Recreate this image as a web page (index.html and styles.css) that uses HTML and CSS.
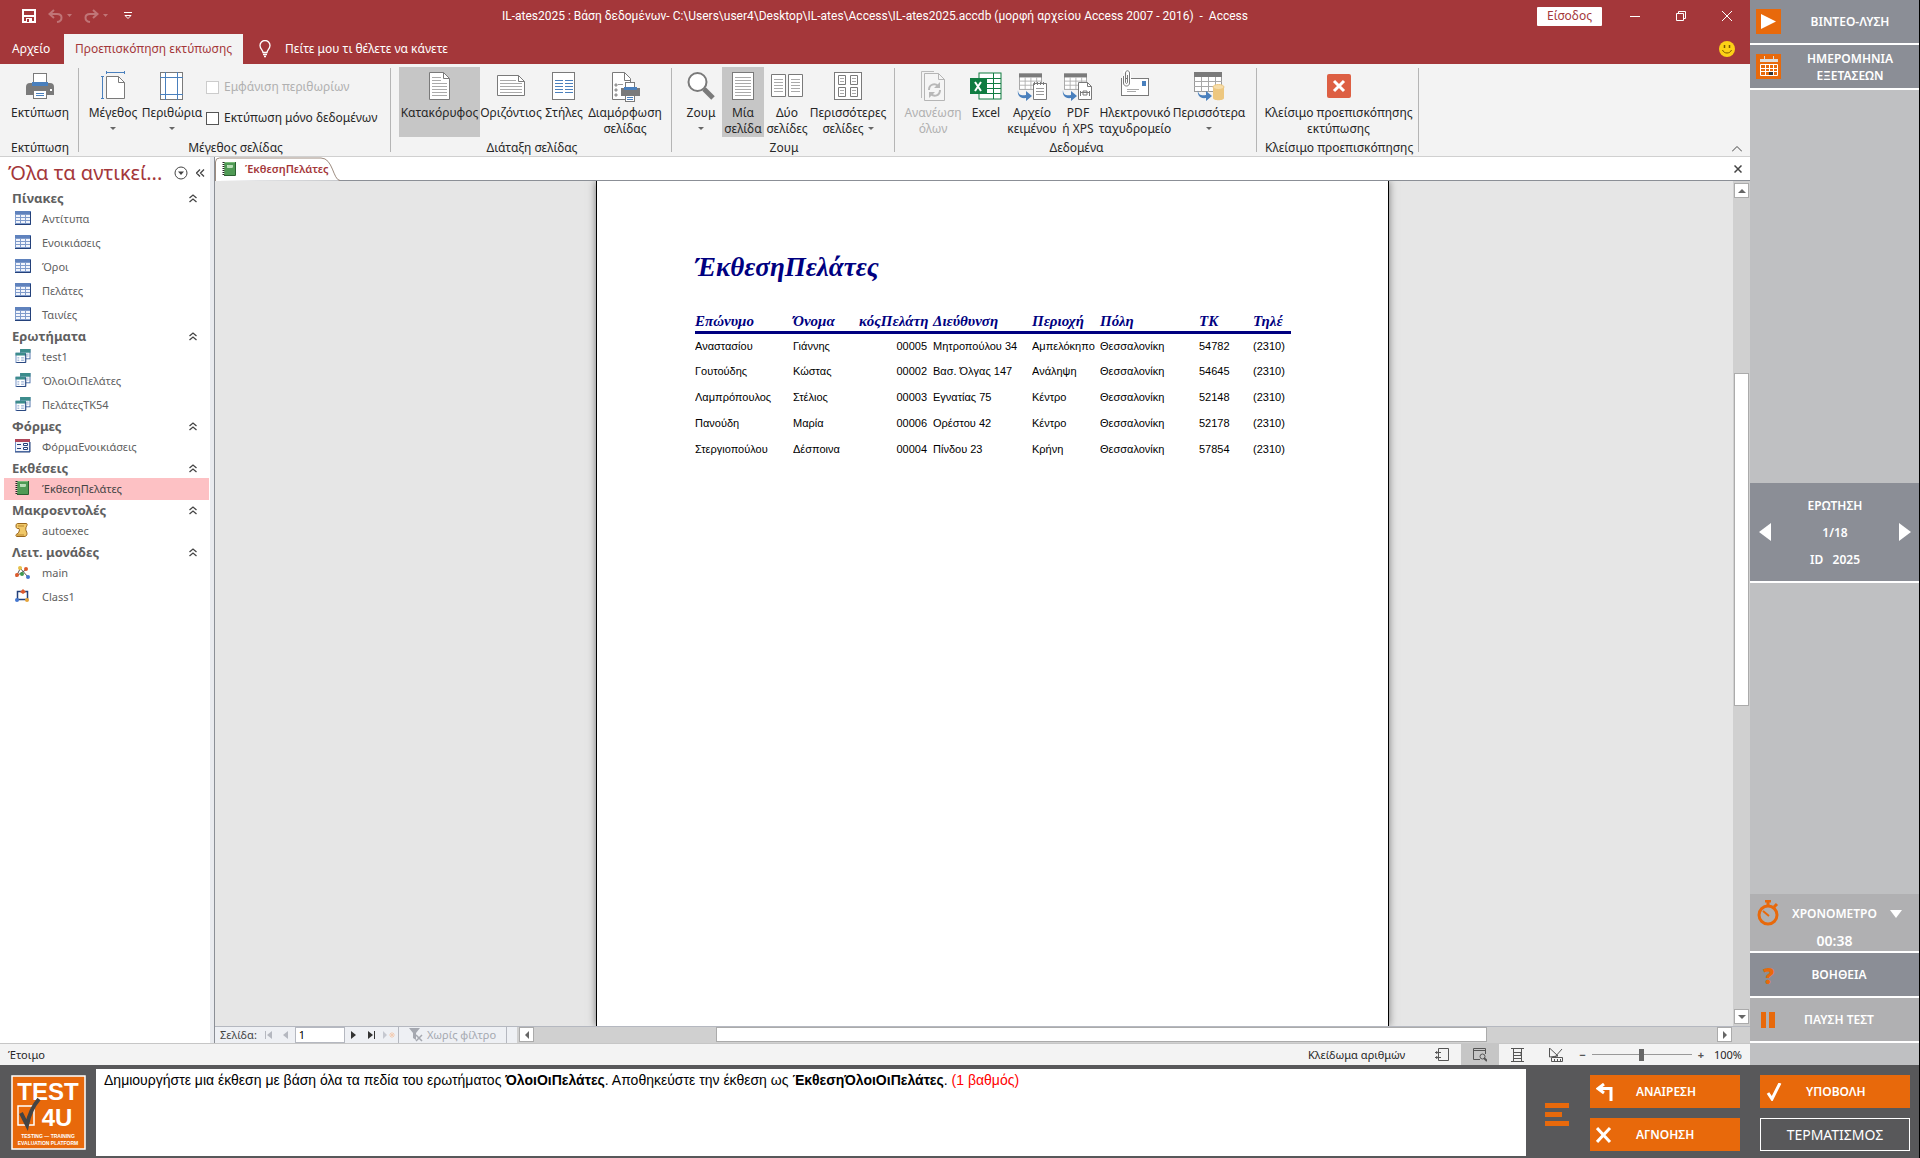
FILE: index.html
```html
<!DOCTYPE html>
<html lang="el">
<head>
    <meta charset="UTF-8">
    <meta name="viewport" content="width=device-width, initial-scale=1.0">
    <title>IL-ates2025 - Access</title>
    <link rel="stylesheet" href="styles.css">
</head>
<body>

    <!-- Shared icons -->
    <svg class="sprite" aria-hidden="true">
        <symbol id="i-table" viewBox="0 0 16 14">
            <rect x="0" y="0" width="16" height="14" fill="#7f9bcb"/>
            <rect x="0" y="0" width="16" height="3" fill="#5f82bd"/>
            <path d="M1 4h4v2H1zM6 4h4v2H6zM11 4h4v2h-4zM1 7h4v2H1zM6 7h4v2H6zM11 7h4v2h-4zM1 10h4v2H1zM6 10h4v2H6zM11 10h4v2h-4z" fill="#f2f5fc"/>
            <path d="M0 13.500h15.500V1" fill="none" stroke="#24417a"/>
        </symbol>
        <symbol id="i-query" viewBox="0 0 16 15">
            <rect x="5.500" y="0.500" width="10" height="10" fill="#fff" stroke="#4a6ea8"/>
            <path d="M5 0h11v4H5z" fill="#3c8c8c"/>
            <path d="M12 5.500h2M12 7.500h2" stroke="#8fa8d0"/>
            <rect x="0.500" y="4.500" width="10" height="10" fill="#fff" stroke="#6f8fc4"/>
            <path d="M0 4h11v3H0z" fill="#3c8c8c"/>
            <path d="M2 9.500h2M6 9.500h3M2 12h2M6 12h3" stroke="#7a98c8"/>
            <path d="M1 14.500h10V5" fill="none" stroke="#24417a"/>
        </symbol>
        <symbol id="i-report" viewBox="0 0 14 14">
            <rect x="2" y="0" width="12" height="13" fill="#4f9a55"/>
            <path d="M2 0h12v1H2zM2 0h1v13H2z" fill="#7cbb7c"/>
            <path d="M13.500 0v13.500H2" fill="none" stroke="#2a6131"/>
            <rect x="5.500" y="3.500" width="5" height="2" fill="#b5dfb3" stroke="#dff2dd" stroke-width=".6"/>
            <path d="M1.500 0v14" stroke="#222" stroke-width="2" stroke-dasharray="1 1"/>
        </symbol>
        <symbol id="i-fold" viewBox="0 0 8 9">
            <path d="M.5 4 4 1l3.500 3M.5 8 4 5l3.500 3" fill="none" stroke="#444" stroke-width="1.300"/>
        </symbol>
        <symbol id="i-arrow" viewBox="0 0 16 12">
            <path d="M1 1c0 5 4 6 8 5V2l6 5-6 5V9C3 10 0 6 1 1z" fill="#4a80bd"/>
        </symbol>
        <symbol id="i-grid" viewBox="0 0 28 26">
            <rect x="0.500" y="3.500" width="27" height="16" fill="#fff" stroke="#999"/>
            <path d="M0 0h28v5H0z" fill="#7a7a7a"/>
            <path d="M0 9.500h28M0 14.500h28M7.500 5v15M14.500 5v15M21.500 5v15" stroke="#a8a8a8"/>
        </symbol>
    </svg>

    <div class="workspace">
        <!-- Access window -->
        <div class="window">
            <header class="titlebar">
                <div class="quick-access">
                    <button type="button" aria-label="Αποθήκευση"><svg width="14" height="14" viewBox="0 0 14 14"><path d="M1 1h12v12H1zM1 7h12" fill="none" stroke="#fff" stroke-width="2"/><path d="M4 9h6v4H4z" fill="#fff"/><path d="M5 10h2v3H5z" fill="#a4373a"/></svg></button>
                    <button type="button" class="dim" disabled aria-label="Αναίρεση"><svg width="24" height="14" viewBox="0 0 24 14"><path d="M6 1 1.500 5 6 9M2 5h7c6 0 6 7 0 8" fill="none" stroke="currentColor" stroke-width="2"/><path d="M19 5h5l-2.500 3z" fill="currentColor"/></svg></button>
                    <button type="button" class="dim" disabled aria-label="Επανάληψη"><svg width="24" height="14" viewBox="0 0 24 14"><path d="m9 1 4.500 4L9 9m4-4H6C0 5 0 12 6 13" fill="none" stroke="currentColor" stroke-width="2"/><path d="M19 5h5l-2.500 3z" fill="currentColor"/></svg></button>
                    <button type="button" aria-label="Προσαρμογή"><svg width="8" height="8" viewBox="0 0 8 8"><path d="M0 .5h8M1 3.500l3 3 3-3z" fill="none" stroke="#fff"/></svg></button>
                </div>
                <h1>IL-ates2025 : Βάση δεδομένων- C:\Users\user4\Desktop\IL-ates\Access\IL-ates2025.accdb (μορφή αρχείου Access 2007 - 2016)&nbsp; -&nbsp; Access</h1>
                <div class="window-controls">
                    <button type="button" class="sign-in">Είσοδος</button>
                    <button type="button" aria-label="Ελαχιστοποίηση"><svg width="10" height="10"><path d="M0 5.500h10" stroke="#fff"/></svg></button>
                    <button type="button" aria-label="Επαναφορά"><svg width="10" height="10"><path d="M.5 2.500h7v7h-7zM2.500 2V.5h7v7H8" fill="none" stroke="#fff"/></svg></button>
                    <button type="button" aria-label="Κλείσιμο"><svg width="10" height="10"><path d="M0 0l10 10M10 0 0 10" stroke="#fff"/></svg></button>
                </div>
            </header>

            <nav class="ribbon-tabs">
                <a href="#" class="file">Αρχείο</a>
                <a href="#" class="active">Προεπισκόπηση εκτύπωσης</a>
                <a href="#" class="tell-me"><svg width="12" height="18" viewBox="0 0 12 18"><path d="M4 12.500C4 10 1 9 1 5.500a5 5 0 0 1 10 0C11 9 8 10 8 12.500zM4 14.500h4M5 16.500h2" fill="none" stroke="#fff" stroke-width="1.300"/></svg>Πείτε μου τι θέλετε να κάνετε</a>
                <button type="button" class="smiley" aria-label="Σχόλια"><svg width="16" height="16"><circle cx="8" cy="8" r="8" fill="#fcd116"/><path d="M5.500 4v3M10.500 4v3" stroke="#7a5500" stroke-width="1.500"/><path d="M3.500 9c1.500 4 7.500 4 9 0" fill="none" stroke="#7a5500"/></svg></button>
            </nav>

            <!-- Ribbon -->
            <div class="ribbon">
                <section class="group g-print">
                    <div class="tools">
                        <button type="button"><svg viewBox="0 0 32 32"><path d="M2 17q0-4 4-4h20q4 0 4 4v8H2z" fill="#7a7a7a"/><rect x="9.500" y="3.500" width="13" height="9" fill="#fff" stroke="#7a7a7a"/><path d="M8 12h16v4H8z" fill="#4a80bd"/><rect x="9.500" y="20.500" width="13" height="8" fill="#fff" stroke="#7a7a7a"/><path d="M12 23.500h8M12 25.500h8" stroke="#4a80bd"/><path d="M26 19h2v2h-2z" fill="#fff"/></svg><span>Εκτύπωση</span></button>
                    </div>
                    <h2>Εκτύπωση</h2>
                </section>
                <section class="group g-size">
                    <div class="tools">
                        <button type="button"><svg viewBox="0 0 32 32"><path d="M9.500 6.500h12l6 6v16h-18z" fill="#fff" stroke="#7a7a7a"/><path d="M21.500 6.500v6h6" fill="none" stroke="#7a7a7a"/><path d="M9.500 2.500h18M9.500 1v3M27.500 1v3M5.500 6.500v22M4 6.500h3M4 28.500h3" stroke="#4a80bd"/></svg><span>Μέγεθος</span><i class="caret"></i></button>
                        <button type="button"><svg viewBox="0 0 32 32"><rect x="4.500" y="2.500" width="22" height="27" fill="#fff" stroke="#7a7a7a"/><path d="M9.500 2v28M21.500 2v28M4 7.500h23M4 24.500h23" stroke="#4a80bd"/></svg><span>Περιθώρια</span><i class="caret"></i></button>
                        <div class="checks">
                            <label class="off"><input type="checkbox" disabled>Εμφάνιση περιθωρίων</label>
                            <label><input type="checkbox">Εκτύπωση μόνο δεδομένων</label>
                        </div>
                    </div>
                    <h2>Μέγεθος σελίδας</h2>
                </section>
                <section class="group g-layout">
                    <div class="tools">
                        <button type="button" class="on"><svg viewBox="0 0 32 32"><path d="M5.500 2.500h14l6 6v21h-20z" fill="#fff" stroke="#7a7a7a"/><path d="M19.500 2.500v6h6" fill="none" stroke="#7a7a7a"/><path d="M8 7.500h9M8 10.500h9M8 13.500h15M8 16.500h15M8 19.500h15M8 22.500h15M8 25.500h15" stroke="#aaa"/></svg><span>Κατακόρυφος</span></button>
                        <button type="button"><svg viewBox="0 0 32 32"><path d="M2.500 5.500h21l6 6v14h-27z" fill="#fff" stroke="#7a7a7a"/><path d="M23.500 5.500v6h6" fill="none" stroke="#7a7a7a"/><path d="M5 10.500h16M5 13.500h22M5 16.500h22M5 19.500h22M5 22.500h22" stroke="#aaa"/></svg><span>Οριζόντιος</span></button>
                        <button type="button"><svg viewBox="0 0 32 32"><rect x="4.500" y="2.500" width="22" height="27" fill="#fff" stroke="#7a7a7a"/><path d="M7 10.500h8M17 10.500h8M7 13.500h8M17 13.500h8M7 16.500h8M17 16.500h8M7 19.500h8M17 19.500h8M7 22.500h8M17 22.500h8" stroke="#4a80bd"/></svg><span>Στήλες</span></button>
                        <button type="button"><svg viewBox="0 0 32 32"><path d="M3.500 2.500h12l6 6v21h-18z" fill="#fff" stroke="#7a7a7a"/><path d="M15.500 2.500v8h6" fill="none" stroke="#7a7a7a"/><path d="M6 14h2v2H6zM6 19h2v2H6zM6 24h2v2H6zM9 14.500h5" fill="#999" stroke="#999"/><path d="M12 18h19v8H12z" fill="#7a7a7a"/><rect x="16.500" y="12.500" width="9" height="6" fill="#fff" stroke="#7a7a7a"/><path d="M15 17h13v3H15z" fill="#4a80bd"/><rect x="16.500" y="25.500" width="9" height="6" fill="#fff" stroke="#7a7a7a"/><path d="M18 27.500h6M18 29.500h6" stroke="#4a80bd"/></svg><span>Διαμόρφωση<br>σελίδας</span></button>
                    </div>
                    <h2>Διάταξη σελίδας</h2>
                </section>
                <section class="group g-zoom">
                    <div class="tools">
                        <button type="button"><svg viewBox="0 0 32 32"><path d="m19 19 9 9" stroke="#7a7a7a" stroke-width="5"/><circle cx="12.500" cy="12" r="9" fill="#fff" stroke="#7a7a7a" stroke-width="2"/></svg><span>Ζουμ</span><i class="caret"></i></button>
                        <button type="button" class="on"><svg viewBox="0 0 32 32"><rect x="5.500" y="2.500" width="21" height="27" fill="#fff" stroke="#7a7a7a"/><path d="M8 7.500h16M8 10.500h16M8 13.500h16M8 16.500h16M8 19.500h16M8 22.500h16M8 25.500h16" stroke="#aaa"/></svg><span>Μία<br>σελίδα</span></button>
                        <button type="button"><svg viewBox="0 0 32 32"><path d="M.5 4.500h14v22H.5zM17.500 4.500h14v22h-14z" fill="#fff" stroke="#7a7a7a"/><path d="M3 9.500h9M3 12.500h9M3 15.500h9M3 18.500h9M3 21.500h9M20 9.500h9M20 12.500h9M20 15.500h9M20 18.500h9M20 21.500h9" stroke="#aaa"/></svg><span>Δύο<br>σελίδες</span></button>
                        <button type="button"><svg viewBox="0 0 32 32"><rect x="2.500" y="2.500" width="27" height="27" fill="#fff" stroke="#7a7a7a"/><path d="M6.500 5.500h7v9h-7zM18.500 5.500h7v9h-7zM6.500 17.500h7v9h-7zM18.500 17.500h7v9h-7z" fill="none" stroke="#7a7a7a"/><path d="M8 8.500h4M8 11.500h4M20 8.500h4M20 11.500h4M8 20.500h4M8 23.500h4M20 20.500h4M20 23.500h4" stroke="#aaa"/></svg><span>Περισσότερες<br>σελίδες<i class="caret inline"></i></span></button>
                    </div>
                    <h2>Ζουμ</h2>
                </section>
                <section class="group g-data">
                    <div class="tools">
                        <button type="button" disabled><svg viewBox="0 0 32 32"><path d="M4.500 28V1.500H17" fill="none" stroke="#bbb"/><path d="M7.500 3.500h14l6 6v21h-20z" fill="#f5f5f5" stroke="#b5b5b5"/><path d="M21.500 3.500v6h6" fill="none" stroke="#b5b5b5"/><path d="M12 20c0-6 6-7 9-4M23 20c0 6-6 7-9 4" fill="none" stroke="#b8b8b8" stroke-width="2"/><path d="M23 12v6h-6zM12 28v-6h6z" fill="#b8b8b8"/></svg><span>Ανανέωση<br>όλων</span></button>
                        <button type="button"><svg viewBox="0 0 32 32"><rect x="9" y="3" width="22" height="26" fill="#fff" stroke="#107c41"/><path d="M9 8.500h22M9 13.500h22M9 18.500h22M9 23.500h22M23.500 3v26" stroke="#107c41"/><rect x="0" y="8" width="17" height="16" fill="#107c41"/><path d="m5 12 6 9M11 12l-6 9" stroke="#fff" stroke-width="2"/></svg><span>Excel</span></button>
                        <button type="button"><svg viewBox="0 0 32 32"><use href="#i-grid" x="3" y="2" width="23" height="24"/><path d="M17.500 13.500h13v16h-13z" fill="#fff" stroke="#7a7a7a"/><path d="M18 13.500h12" stroke="#7a7a7a" stroke-width="3" stroke-dasharray="1 2"/><path d="M20 18.500h8M20 21.500h8M20 24.500h8" stroke="#999"/><use href="#i-arrow" x="1" y="19" width="16" height="12"/></svg><span>Αρχείο<br>κειμένου</span></button>
                        <button type="button"><svg viewBox="0 0 32 32"><use href="#i-grid" x="2" y="2" width="23" height="24"/><path d="M16.500 12.500h9l4 4v13h-13z" fill="#fff" stroke="#7a7a7a"/><path d="M25.500 12.500v4h4" fill="none" stroke="#7a7a7a"/><path d="M18.500 21v5M27.500 21v5M18 22.500h10M21 21h4v4h-4z" fill="none" stroke="#7a7a7a"/><use href="#i-arrow" x="0" y="19" width="16" height="12"/></svg><span>PDF<br>ή XPS</span></button>
                        <button type="button"><svg viewBox="0 0 32 32"><rect x="2.500" y="8.500" width="27" height="17" fill="#fff" stroke="#7a7a7a"/><path d="M23 11h4v5h-4z" fill="#4a80bd"/><path d="M8 19.500h12M8 21.500h9" stroke="#aaa"/><path d="M5 6v7c0 3 5 3 5 0V3c0-3-4-3-4 0" fill="none" stroke="#fff" stroke-width="4"/><path d="M4.500 6v7c0 4 6 4 6 0V3c0-3-4-3-4 0v9c0 2 2 2 2 0V5" fill="none" stroke="#7a7a7a"/></svg><span>Ηλεκτρονικό<br>ταχυδρομείο</span></button>
                        <button type="button"><svg viewBox="0 0 32 32"><use href="#i-grid" x="1" y="2" width="28" height="26"/><path d="M20 17v11c0 3 11 3 11 0V17z" fill="#edc77f"/><ellipse cx="25.500" cy="17" rx="5.500" ry="2.500" fill="#f6dca8" stroke="#edc77f"/><use href="#i-arrow" x="4" y="19" width="16" height="12"/></svg><span>Περισσότερα</span><i class="caret"></i></button>
                    </div>
                    <h2>Δεδομένα</h2>
                </section>
                <section class="group g-close">
                    <div class="tools">
                        <button type="button"><svg viewBox="0 0 32 32"><rect x="4" y="4" width="24" height="24" rx="2" fill="#dd5f43"/><path d="m11 11 10 10M21 11 11 21" stroke="#fff" stroke-width="3"/></svg><span>Κλείσιμο προεπισκόπησης<br>εκτύπωσης</span></button>
                    </div>
                    <h2>Κλείσιμο προεπισκόπησης</h2>
                </section>
                <button type="button" class="collapse" aria-label="Σύμπτυξη κορδέλας"><svg width="10" height="6"><path d="M0 5.500l5-5 5 5" fill="none" stroke="#444"/></svg></button>
            </div>

            <div class="content">
                <!-- Navigation pane -->
                <aside class="nav-pane">
                    <div class="nav-title">
                        <h2>Όλα τα αντικεί...</h2>
                        <button type="button" aria-label="Επιλογές"><svg width="14" height="14"><circle cx="7" cy="7" r="6" fill="#fff" stroke="#444"/><path d="M4 5.500h6L7 9z" fill="#444"/></svg></button>
                        <button type="button" aria-label="Σύμπτυξη"><svg width="9" height="8"><path d="M4 .5.5 4 4 7.500M8 .5 4.500 4 8 7.500" fill="none" stroke="#444" stroke-width="1.300"/></svg></button>
                    </div>
                    <h3>Πίνακες<svg><use href="#i-fold"/></svg></h3>
                    <ul>
                        <li><a href="#"><svg><use href="#i-table"/></svg>Αντίτυπα</a></li>
                        <li><a href="#"><svg><use href="#i-table"/></svg>Ενοικιάσεις</a></li>
                        <li><a href="#"><svg><use href="#i-table"/></svg>Όροι</a></li>
                        <li><a href="#"><svg><use href="#i-table"/></svg>Πελάτες</a></li>
                        <li><a href="#"><svg><use href="#i-table"/></svg>Ταινίες</a></li>
                    </ul>
                    <h3>Ερωτήματα<svg><use href="#i-fold"/></svg></h3>
                    <ul>
                        <li><a href="#"><svg><use href="#i-query"/></svg>test1</a></li>
                        <li><a href="#"><svg><use href="#i-query"/></svg>ΌλοιΟιΠελάτες</a></li>
                        <li><a href="#"><svg><use href="#i-query"/></svg>ΠελάτεςΤΚ54</a></li>
                    </ul>
                    <h3>Φόρμες<svg><use href="#i-fold"/></svg></h3>
                    <ul>
                        <li><a href="#"><svg viewBox="0 0 16 14"><rect x=".5" y=".5" width="14" height="12" fill="#f3f5fb" stroke="#6f8fc4"/><path d="M0 0h15v3H0z" fill="#b0485c"/><path d="M2 5.500h4M2 9.500h4" stroke="#24417a"/><path d="M8.500 4.500h4v2h-4zM8.500 8.500h4v2h-4z" fill="#fff" stroke="#24417a"/><path d="M0 13h15V3" fill="none" stroke="#24417a"/></svg>ΦόρμαΕνοικιάσεις</a></li>
                    </ul>
                    <h3>Εκθέσεις<svg><use href="#i-fold"/></svg></h3>
                    <ul>
                        <li><a href="#" class="selected"><svg><use href="#i-report" width="14" height="14"/></svg>ΈκθεσηΠελάτες</a></li>
                    </ul>
                    <h3>Μακροεντολές<svg><use href="#i-fold"/></svg></h3>
                    <ul>
                        <li><a href="#"><svg viewBox="0 0 16 14"><path d="M2.500.5H11c2 0 1 2 0 4-1 3 1 4 1 6s-1 3-3 3H2c-2 0-1-3 1-3 1-2 2-3 1-5H2.500c-2 0-2-5 0-5z" fill="#f0c868" stroke="#99661c"/><path d="M3 3h6M2 12h7" stroke="#b98530"/></svg>autoexec</a></li>
                    </ul>
                    <h3>Λειτ. μονάδες<svg><use href="#i-fold"/></svg></h3>
                    <ul>
                        <li><a href="#"><svg viewBox="0 0 16 14"><path d="M1 12 6 2M3 10l9-6M5 3l8 9" stroke="#555"/><circle cx="5" cy="3" r="2" fill="#e6c14a"/><circle cx="11" cy="4" r="2" fill="#dd5a2b"/><circle cx="2" cy="10" r="2" fill="#dd5a2b"/><circle cx="7" cy="9" r="2" fill="#3d9a50"/><circle cx="13" cy="12" r="2" fill="#4477d0"/></svg>main</a></li>
                        <li><a href="#"><svg viewBox="0 0 16 14"><path d="M2.500 2.500h10v8h-10z" fill="#fff" stroke="#24417a" stroke-width="1.500"/><path d="M5 3l3-3 3 3-3 2z" fill="#dd5a2b"/><circle cx="2" cy="11" r="2" fill="#4477d0"/><circle cx="12" cy="11" r="2" fill="#e6a53a"/></svg>Class1</a></li>
                    </ul>
                </aside>

                <!-- Report preview -->
                <main class="document">
                    <div class="doc-tabs">
                        <a href="#" class="doc-tab">
                            <svg class="tab-shape" width="128" height="24"><path d="M.5 24V5q0-4 4-4H106c12 0 12 22 19 22.500" fill="#fff" stroke="#9d8c80"/></svg>
                            <svg class="tab-icon"><use href="#i-report"/></svg>
                            <span>ΈκθεσηΠελάτες</span>
                        </a>
                        <button type="button" aria-label="Κλείσιμο καρτέλας"><svg width="8" height="8"><path d="M.5.5l7 7M7.500.5l-7 7" stroke="#444" stroke-width="1.500"/></svg></button>
                    </div>
                    <div class="preview">
                        <div class="canvas">
                            <article class="page">
                                <h2>ΈκθεσηΠελάτες</h2>
                                <table>
                                    <colgroup>
                                        <col class="c-name"><col class="c-first"><col class="c-code"><col class="c-address"><col class="c-area"><col class="c-city"><col class="c-zip"><col class="c-phone">
                                    </colgroup>
                                    <thead>
                                        <tr><th>Επώνυμο</th><th>Όνομα</th><th class="num">κόςΠελάτη</th><th>Διεύθυνση</th><th>Περιοχή</th><th>Πόλη</th><th>ΤΚ</th><th>Τηλέ</th></tr>
                                    </thead>
                                    <tbody>
                                        <tr><td>Αναστασίου</td><td>Γιάννης</td><td class="num">00005</td><td>Μητροπούλου 34</td><td>Αμπελόκηπο</td><td>Θεσσαλονίκη</td><td>54782</td><td>(2310)</td></tr>
                                        <tr><td>Γουτούδης</td><td>Κώστας</td><td class="num">00002</td><td>Βασ. Όλγας 147</td><td>Ανάληψη</td><td>Θεσσαλονίκη</td><td>54645</td><td>(2310)</td></tr>
                                        <tr><td>Λαμπρόπουλος</td><td>Στέλιος</td><td class="num">00003</td><td>Εγνατίας 75</td><td>Κέντρο</td><td>Θεσσαλονίκη</td><td>52148</td><td>(2310)</td></tr>
                                        <tr><td>Πανούδη</td><td>Μαρία</td><td class="num">00006</td><td>Ορέστου 42</td><td>Κέντρο</td><td>Θεσσαλονίκη</td><td>52178</td><td>(2310)</td></tr>
                                        <tr><td>Στεργιοπούλου</td><td>Δέσποινα</td><td class="num">00004</td><td>Πίνδου 23</td><td>Κρήνη</td><td>Θεσσαλονίκη</td><td>57854</td><td>(2310)</td></tr>
                                    </tbody>
                                </table>
                            </article>
                        </div>
                        <div class="scroll-v">
                            <button type="button" aria-label="Πάνω"><svg width="8" height="4"><path d="M0 4l4-4 4 4z" fill="#666"/></svg></button>
                            <div class="track"><div class="thumb"></div></div>
                            <button type="button" aria-label="Κάτω"><svg width="8" height="4"><path d="M0 0l4 4 4-4z" fill="#666"/></svg></button>
                        </div>
                    </div>
                    <div class="record-bar">
                        <div class="pager">
                            <label for="page-no">Σελίδα:</label>
                            <button type="button" disabled aria-label="Πρώτη"><svg width="7" height="8"><path d="M.5 0v8" stroke="#b5b8c0"/><path d="M7 0v8L2 4z" fill="#b5b8c0"/></svg></button>
                            <button type="button" disabled aria-label="Προηγούμενη"><svg width="5" height="8"><path d="M5 0v8L0 4z" fill="#b5b8c0"/></svg></button>
                            <input type="text" id="page-no" value="1">
                            <button type="button" aria-label="Επόμενη"><svg width="5" height="8"><path d="M0 0v8l5-4z" fill="#333"/></svg></button>
                            <button type="button" aria-label="Τελευταία"><svg width="7" height="8"><path d="M6.500 0v8" stroke="#333"/><path d="M0 0v8l5-4z" fill="#333"/></svg></button>
                            <button type="button" disabled aria-label="Νέα"><svg width="12" height="8"><path d="M0 0v8l4-4z" fill="#c5c8d0"/><path d="M9 1v6M6 4h6M7 2l4 4M11 2 7 6" stroke="#f3cdb4"/></svg></button>
                        </div>
                        <button type="button" class="filter" disabled><svg width="14" height="14"><path d="M0 0h11L7 5v7L4 10V5z" fill="#a5a8b0"/><path d="M7 7l6 6M13 7l-6 6" stroke="#a5a8b0" stroke-width="1.500"/></svg>Χωρίς φίλτρο</button>
                        <div class="scroll-h">
                            <button type="button" aria-label="Αριστερά"><svg width="4" height="8"><path d="M4 0v8L0 4z" fill="#666"/></svg></button>
                            <div class="track"><div class="thumb"></div></div>
                            <button type="button" aria-label="Δεξιά"><svg width="4" height="8"><path d="M0 0v8l4-4z" fill="#666"/></svg></button>
                        </div>
                    </div>
                </main>
            </div>

            <!-- Status bar -->
            <footer class="status">
                <span>Έτοιμο</span>
                <span class="numlock">Κλείδωμα αριθμών</span>
                <button type="button" aria-label="Προβολή αναφοράς"><svg width="14" height="14"><path d="M3.500.5h10v12h-10zM0 4.500h6M0 9.500h6" fill="none" stroke="#555"/><path d="M1 3l3 1.500L1 6M1 8l3 1.500L1 11" fill="#555"/></svg></button>
                <button type="button" class="on" aria-label="Προεπισκόπηση"><svg width="14" height="14"><path d="M7 11.500H.5V.5h12V6M.5 2.500h12" fill="none" stroke="#555"/><circle cx="9.500" cy="8.500" r="2.500" fill="none" stroke="#555"/><path d="m11 10 3 3" stroke="#555" stroke-width="2"/></svg></button>
                <button type="button" aria-label="Προβολή διάταξης"><svg width="14" height="14"><path d="M0 .5h13M2.500 1v12M10.500 1v12M0 13.500h13M3 4.500h7v3H3M3 10.500h7" fill="none" stroke="#555"/></svg></button>
                <button type="button" aria-label="Προβολή σχεδίασης"><svg width="14" height="14"><path d="M.5 0v9L9 8zM6 9l7-8" fill="none" stroke="#555"/><path d="M2.500 9.500h11v4h-11zM5.500 11v2M8.500 11v2M11.500 11v2" fill="#f3f3f3" stroke="#555"/></svg></button>
                <div class="zoom">
                    <span>−</span>
                    <input type="range" min="0" max="200" value="100" aria-label="Ζουμ">
                    <span>+</span>
                    <span class="percent">100%</span>
                </div>
            </footer>
        </div>

        <!-- Test side panel -->
        <aside class="side">
            <button type="button" class="cell dark"><svg width="25" height="25"><path d="M0 0h25v25H0z" fill="#e8690b"/><path d="M5 5v15l15-7.500z" fill="#fff"/></svg><span>ΒΙΝΤΕΟ-ΛΥΣΗ</span></button>
            <button type="button" class="cell dark"><svg width="25" height="25"><path d="M0 0h25v25H0z" fill="#e8690b"/><path d="M4 5h18v3H4z" fill="#ddd"/><path d="M8.500 2v5M17.500 2v5" stroke="#ddd"/><path d="M4.500 10.500h17v11h-17zM4 14.500h18M4 17.500h18M9.500 10v12M13.500 10v12M17.500 10v12" fill="none" stroke="#fff"/><path d="M13 18h4v3h-4z" fill="#333"/></svg><span>ΗΜΕΡΟΜΗΝΙΑ<br>ΕΞΕΤΑΣΕΩΝ</span></button>
            <div class="question">
                <button type="button" aria-label="Προηγούμενη ερώτηση"><svg width="12" height="18"><path d="M12 0v18L0 9z" fill="#fff"/></svg></button>
                <p>ΕΡΩΤΗΣΗ<br>1/18<br>ID &nbsp; 2025</p>
                <button type="button" aria-label="Επόμενη ερώτηση"><svg width="12" height="18"><path d="M0 0v18l12-9z" fill="#fff"/></svg></button>
            </div>
            <div class="timer">
                <svg width="22" height="26" viewBox="0 0 22 26"><circle cx="11" cy="15" r="9" fill="none" stroke="#e8690b" stroke-width="3"/><path d="M8 1h6M11 0v5M17 7l3-3" stroke="#e8690b" stroke-width="3"/><path d="m6 11 6 5" stroke="#e8690b" stroke-width="2"/></svg>
                <p>ΧΡΟΝΟΜΕΤΡΟ<br><strong>00:38</strong></p>
                <svg width="12" height="8"><path d="M0 0h12L6 8z" fill="#fff"/></svg>
            </div>
            <button type="button" class="cell dark centered"><b>?</b><span>ΒΟΗΘΕΙΑ</span></button>
            <button type="button" class="cell centered"><svg width="25" height="18"><path d="M5 1h5v16H5zM13 1h6v16h-6z" fill="#e8690b"/></svg><span>ΠΑΥΣΗ ΤΕΣΤ</span></button>
        </aside>
    </div>

    <!-- Question bar -->
    <div class="exam-bar">
        <div class="logo">
            <svg width="75" height="75" viewBox="0 0 75 75" role="img" aria-label="TEST4U">
                <rect x="1" y="1" width="73" height="73" fill="#e8690b" stroke="#fff" stroke-width="1.500"/>
                <text x="37" y="25" class="logo-big" text-anchor="middle">TEST</text>
                <text x="46" y="51" class="logo-big" text-anchor="middle">4U</text>
                <path d="M7 31h16v19H7z" fill="none" stroke="#fff" stroke-width="1.500"/>
                <path d="M10 38l6 12C18 40 22 31 28 24" fill="none" stroke="#444" stroke-width="4"/>
                <text x="37" y="63" class="logo-small" text-anchor="middle">TESTING — TRAINING</text>
                <text x="37" y="70" class="logo-small" text-anchor="middle">EVALUATION PLATFORM</text>
            </svg>
        </div>
        <div class="task">Δημιουργήστε μια έκθεση με βάση όλα τα πεδία του ερωτήματος <b>ΌλοιΟιΠελάτες</b>. Αποθηκεύστε την έκθεση ως <b>ΈκθεσηΌλοιΟιΠελάτες</b>. <em>(1 βαθμός)</em></div>
        <button type="button" class="menu" aria-label="Μενού"><svg width="24" height="24"><path d="M0 0h24v5H0zM0 9h17v5H0zM0 18h24v5H0z" fill="#e8690b"/></svg></button>
        <div class="actions">
            <button type="button"><svg width="18" height="18"><path d="M8 1 2 5.500 8 10M2 5.500h13V18" fill="none" stroke="#fff" stroke-width="3"/></svg>ΑΝΑΙΡΕΣΗ</button>
            <button type="button"><svg width="18" height="18"><path d="M2 10l4 6L14 0" fill="none" stroke="#fff" stroke-width="3"/></svg>ΥΠΟΒΟΛΗ</button>
            <button type="button"><svg width="18" height="18"><path d="M1 2l13 14M14 2 1 16" stroke="#fff" stroke-width="3"/></svg>ΑΓΝΟΗΣΗ</button>
            <button type="button" class="end">ΤΕΡΜΑΤΙΣΜΟΣ</button>
        </div>
    </div>

</body>
</html>
```
FILE: styles.css
```css
/* Basic reset and styling */
* {
    margin: 0;
    padding: 0;
    box-sizing: border-box;
}

body {
    display: flex;
    flex-direction: column;
    min-height: 100vh;
    font-family: "Noto Sans", "Open Sans", sans-serif;
    font-size: 12px;
    line-height: 16px;
    color: #262626;
    border-right: 1px solid #000;
}

button, input {
    font: inherit;
    color: inherit;
    background: none;
    border: none;
}

a {
    color: inherit;
    text-decoration: none;
}

ul {
    list-style: none;
}

svg {
    display: block;
    flex: none;
}

.sprite {
    position: absolute;
    width: 0;
    height: 0;
}

.workspace {
    flex: 1;
    display: flex;
}

.window {
    flex: 1;
    min-width: 0;
    display: flex;
    flex-direction: column;
}

/* Title bar */
.titlebar {
    display: grid;
    grid-template-columns: 1fr auto 1fr;
    align-items: center;
    height: 34px;
    padding-bottom: 2px;
    background: #a4373a;
    color: #fff;
}

.titlebar h1 {
    font-family: Roboto, "Noto Sans", sans-serif;
    font-size: 12px;
    font-weight: normal;
    white-space: nowrap;
}

.quick-access {
    display: flex;
    align-items: center;
    gap: 12px;
    padding-left: 22px;
}

.quick-access button:last-child {
    margin-left: 4px;
}

.dim {
    color: #c07577;
}

.window-controls {
    display: flex;
    justify-content: flex-end;
    align-items: center;
    height: 32px;
}

.window-controls button {
    display: flex;
    justify-content: center;
    align-items: center;
    width: 46px;
    height: 30px;
}

.window-controls .sign-in {
    width: 65px;
    height: 19px;
    margin-right: 10px;
    background: #fff;
    color: #a4373a;
    border-radius: 1px;
}

/* Ribbon tabs */
.ribbon-tabs {
    display: flex;
    height: 30px;
    line-height: 30px;
    background: #a4373a;
    color: #fff;
}

.ribbon-tabs .file {
    width: 64px;
    padding-left: 12px;
}

.ribbon-tabs .active {
    width: 179px;
    text-align: center;
    background: #f3f3f3;
    color: #a4373a;
}

.ribbon-tabs .tell-me {
    display: flex;
    align-items: center;
    gap: 14px;
    padding-left: 16px;
}

.smiley {
    margin-left: auto;
    padding-right: 15px;
}

/* Ribbon */
.ribbon {
    display: flex;
    height: 93px;
    background: #f3f3f3;
    border-bottom: 1px solid #d0d0d0;
}

.group {
    position: relative;
    padding: 3px 7px 0 8px;
}

.group::after {
    content: "";
    position: absolute;
    top: 4px;
    right: 0;
    width: 1px;
    height: 84px;
    background: #b5b5b5;
}

.group h2 {
    margin-top: 4px;
    font-size: 12px;
    font-weight: normal;
    text-align: center;
    white-space: nowrap;
}

.tools {
    display: grid;
    height: 69px;
}

.tools button {
    display: flex;
    flex-direction: column;
    align-items: center;
    gap: 3px;
    min-width: 0;
    padding-top: 3px;
    white-space: nowrap;
}

.tools button svg {
    width: 32px;
    height: 32px;
}

.tools button.on {
    background: #c6c6c6;
}

.tools button:disabled {
    color: #b0b0b0;
}

.caret {
    display: block;
    margin-top: 3px;
    border: 3px solid transparent;
    border-top-color: #666;
    border-bottom: none;
}

.caret.inline {
    display: inline-block;
    margin: 0 0 3px 4px;
}

.g-print {
    width: 79px;
}

.g-size {
    width: 312px;
}

.g-size .tools {
    grid-template-columns: 52px 66px 1fr;
}

.g-layout {
    width: 281px;
}

.g-layout .tools {
    grid-template-columns: 81px 62px 44px 78px;
}

.g-zoom {
    width: 223px;
}

.g-zoom .tools {
    grid-template-columns: 42px 42px 46px 76px;
}

.g-data {
    width: 362px;
}

.g-data .tools {
    grid-template-columns: 60px 46px 46px 46px 68px 80px;
}

.g-close {
    width: 162px;
}

.checks {
    display: flex;
    flex-direction: column;
    gap: 15px;
    padding: 12px 0 0 1px;
}

.checks label {
    display: flex;
    align-items: center;
    gap: 5px;
    white-space: nowrap;
}

.checks input {
    appearance: none;
    width: 13px;
    height: 13px;
    background: #fff;
    border: 1px solid #555;
}

.checks .off {
    color: #b0b0b0;
}

.checks .off input {
    border-color: #ccc;
}

.collapse {
    align-self: flex-end;
    margin-left: auto;
    padding: 0 8px 4px;
}

/* Navigation pane */
.content {
    flex: 1;
    display: flex;
}

.nav-pane {
    width: 215px;
    padding: 0 5px 0 4px;
    background: linear-gradient(#e9ebef, #e9ebef) right / 4px 100% no-repeat #fff;
    border-right: 1px solid #8b8f96;
}

.nav-title {
    display: flex;
    align-items: center;
    gap: 8px;
    height: 32px;
    padding: 0 4px;
}

.nav-title h2 {
    flex: 1;
    font-size: 20px;
    line-height: 32px;
    font-weight: normal;
    color: #a4373a;
    white-space: nowrap;
}

.nav-pane h3 {
    display: flex;
    justify-content: space-between;
    align-items: center;
    height: 18px;
    padding: 0 12px 0 8px;
    font-size: 13px;
    color: #606060;
}

.nav-pane h3 svg {
    width: 8px;
    height: 9px;
}

.nav-pane li {
    display: flow-root;
}

.nav-pane li a {
    display: flex;
    align-items: center;
    gap: 11px;
    height: 22px;
    margin: 1px 0;
    padding-left: 11px;
    font-size: 11px;
    color: #606060;
}

.nav-pane li svg {
    width: 16px;
    height: 14px;
    margin-bottom: 3px;
}

.nav-pane li .selected {
    background: #fdc1c4;
    color: #444;
}

/* Document */
.document {
    flex: 1;
    min-width: 0;
    display: flex;
    flex-direction: column;
}

.doc-tabs {
    display: flex;
    justify-content: space-between;
    align-items: center;
    height: 24px;
    background: #fff;
    border-bottom: 1px solid #8b8f96;
}

.doc-tabs button {
    padding-right: 8px;
}

.doc-tab {
    position: relative;
    display: flex;
    align-items: center;
    gap: 9px;
    height: 24px;
    padding-left: 7px;
    color: #a4373a;
    font-weight: 600;
    font-size: 11px;
}

.tab-shape {
    position: absolute;
    left: 0;
    top: 0;
}

.tab-icon {
    position: relative;
    width: 14px;
    height: 14px;
}

.doc-tab span {
    position: relative;
}

.preview {
    flex: 1;
    display: flex;
}

.canvas {
    flex: 1;
    display: flex;
    padding-left: 381px;
    background: #e6e6e6;
    overflow: hidden;
}

.page {
    width: 793px;
    padding: 68px 0 0 98px;
    background: #fff;
    border: solid #000;
    border-width: 0 1px;
    box-shadow: 0 0 8px #777;
}

.page h2 {
    font: italic bold 27px/36px "Liberation Serif", serif;
    color: #000080;
}

.page table {
    width: 596px;
    margin-top: 27px;
    table-layout: fixed;
    border-collapse: collapse;
    font: 11px/16px "Liberation Sans", sans-serif;
    color: #000;
}

.page th {
    height: 20px;
    padding: 0;
    font: italic bold 15px/18px "Liberation Serif", serif;
    text-align: left;
    white-space: nowrap;
    color: #000080;
    border-bottom: 3px solid #000080;
}

.page td {
    height: 26px;
    padding: 0;
    white-space: nowrap;
    overflow: hidden;
}

.page .num {
    padding-right: 6px;
    text-align: right;
}

.c-name {
    width: 98px;
}

.c-first {
    width: 66px;
}

.c-code {
    width: 74px;
}

.c-address {
    width: 99px;
}

.c-area {
    width: 68px;
}

.c-city {
    width: 99px;
}

.c-zip {
    width: 54px;
}

.c-phone {
    width: 38px;
}

/* Scroll bars */
.scroll-v {
    display: flex;
    flex-direction: column;
    width: 17px;
    padding: 2px 1px;
    background: #d0d0d0;
}

.scroll-v button, .scroll-h button {
    display: flex;
    justify-content: center;
    align-items: center;
    width: 15px;
    height: 15px;
    background: #fff;
    border: 1px solid #ababab;
}

.scroll-v .track {
    flex: 1;
    padding-top: 175px;
}

.scroll-v .thumb {
    height: 333px;
    background: #fff;
    border: 1px solid #ababab;
}

.record-bar {
    display: flex;
    height: 17px;
    font-size: 11px;
    background: #eef0f4;
    border-top: 1px solid #b5b8c0;
}

.pager {
    display: flex;
    align-items: center;
    width: 184px;
    padding-left: 5px;
    border-right: 1px solid #b5b8c0;
}

.pager label {
    width: 40px;
    color: #444;
}

.pager button {
    display: flex;
    justify-content: center;
    width: 18px;
}

.pager input {
    width: 50px;
    height: 16px;
    padding-left: 3px;
    background: #fff;
    border: 1px solid #b5b8c0;
    color: #000;
}

.filter {
    display: flex;
    align-items: center;
    justify-content: center;
    gap: 4px;
    width: 108px;
    color: #a5a8b0;
    border-right: 1px solid #b5b8c0;
}

.scroll-h {
    flex: 1;
    display: flex;
    padding: 0 18px 0 2px;
    margin-left: 10px;
    background: #d0d0d0;
}

.scroll-h .track {
    flex: 1;
    padding: 0 19% 0 15%;
}

.scroll-h .thumb {
    height: 15px;
    background: #fff;
    border: 1px solid #ababab;
}

/* Status bar */
.status {
    display: flex;
    align-items: center;
    height: 22px;
    padding: 0 8px;
    font-size: 11px;
    background: #f3f3f3;
    border-top: 1px solid #c6c6c6;
}

.numlock {
    margin-left: auto;
    margin-right: 18px;
}

.status button {
    display: flex;
    justify-content: center;
    align-items: center;
    width: 38px;
    height: 21px;
}

.status button.on {
    background: #c6c6c6;
}

.zoom {
    display: flex;
    align-items: center;
    gap: 6px;
    padding-left: 4px;
    font-weight: bold;
    color: #555;
}

.zoom input {
    appearance: none;
    width: 100px;
    height: 12px;
    background: linear-gradient(#999, #999) center / 100% 1px no-repeat;
}

.zoom input::-webkit-slider-thumb {
    appearance: none;
    width: 5px;
    height: 12px;
    background: #666;
}

.zoom .percent {
    margin-left: 4px;
    font-weight: normal;
    color: #262626;
}

/* Test side panel */
.side {
    display: grid;
    grid-template-rows: 45px 45px 4fr 3fr 45px 45px;
    width: 169px;
    padding-bottom: 22px;
    background: #bfc0c2;
    color: #fff;
    font-weight: 600;
}

.cell {
    display: flex;
    align-items: center;
    padding-left: 6px;
    background: #b0b0b2;
    border-bottom: 2px solid #fff;
}

.cell span {
    flex: 1;
    padding-right: 10px;
    padding-left: 10px;
    text-align: center;
    line-height: 17px;
}

.cell.centered span {
    padding-right: 32px;
}

.cell b {
    width: 25px;
    font-size: 22px;
    text-align: center;
    color: #e8690b;
}

.dark, .question {
    background: #8b8e96;
}

.question {
    display: flex;
    justify-content: space-between;
    align-items: center;
    align-self: end;
    height: 100px;
    padding: 0 8px 0 9px;
    border-bottom: 2px solid #fff;
}

.question p {
    line-height: 27px;
    text-align: center;
}

.timer {
    display: flex;
    align-items: flex-start;
    justify-content: space-between;
    align-self: end;
    height: 59px;
    padding: 6px 17px 0 7px;
    border-bottom: 2px solid #fff;
    background: #b0b0b2;
}

.timer p {
    line-height: 27px;
    text-align: center;
}

.timer strong {
    font-size: 14px;
    font-weight: 600;
}

.timer svg:last-child {
    margin-top: 10px;
}

/* Question bar */
.exam-bar {
    display: flex;
    height: 93px;
    padding: 4px 9px 2px 11px;
    background: #58585a;
}

.logo {
    width: 85px;
    padding-top: 6px;
}

.logo-big {
    font: bold 24px "Liberation Sans", sans-serif;
    fill: #fff;
}

.logo-small {
    font: bold 5px "Liberation Sans", sans-serif;
    fill: #fff;
}

.task {
    flex: 1;
    padding: 2px 8px;
    background: #fff;
    color: #000;
    font: 14px/18px "Liberation Sans", sans-serif;
}

.task em {
    font-style: normal;
    color: #f00;
}

.menu {
    padding: 4px 21px 0 19px;
}

.actions {
    display: grid;
    grid-template-columns: 150px 150px;
    gap: 10px 20px;
    padding: 6px 0 5px;
}

.actions button {
    display: flex;
    align-items: center;
    padding-left: 6px;
    background: #e8690b;
    color: #fff;
    font-weight: 600;
    gap: 22px;
}

.actions .end {
    justify-content: center;
    padding: 0;
    background: none;
    border: 1px solid #fff;
    font-size: 14px;
    font-weight: normal;
}
```
